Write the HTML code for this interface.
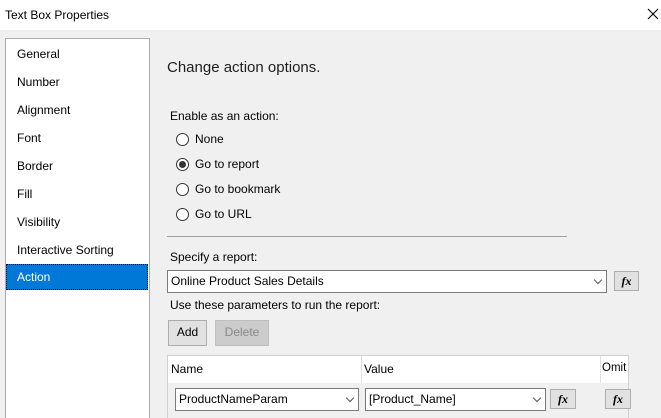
<!DOCTYPE html>
<html style="width:661px;height:418px;overflow:hidden"><head><style>
*{box-sizing:border-box;margin:0;padding:0}
body{width:661px;height:418px;overflow:hidden;background:#f0f0f0;font-family:"Liberation Sans",sans-serif;font-size:12px;color:#000;position:relative}
.a{position:absolute}
.title{left:0;top:0;width:661px;height:30px;background:#fff}
.nav{left:5px;top:38px;width:145px;height:390px;background:#fff;border:1px solid #adadad}
.nav div{position:absolute;left:11px;font-size:12px}
.sel{left:6px;top:264px;width:142px;height:26px;background:#0078d7;border:1px dotted #003;}
.radio{width:13px;height:13px;border:1px solid #333;border-radius:50%;background:#fff}
.combo{background:#fff;border:1px solid #7a7a7a;padding-left:3px;line-height:20px}
.chev{position:absolute;right:5px;top:3px;width:6px;height:6px;border-right:1px solid #555;border-bottom:1px solid #555;transform:rotate(45deg)}
.fx{background:#e1e1e1;border:1px solid #adadad;font-family:"Liberation Serif",serif;font-style:italic;font-weight:bold;text-align:center;font-size:12px;line-height:18px}
.btn{background:#e1e1e1;border:1px solid #adadad;text-align:center;line-height:23px}
</style></head><body>
<div class="a title"></div>
<div class="a" style="left:5px;top:8px">Text Box Properties</div>
<svg class="a" style="left:647px;top:8px" width="12" height="12"><path d="M1 1L11 11M11 1L1 11" stroke="#000" stroke-width="1.1"/></svg>
<div class="a nav">
<div style="top:8px">General</div><div style="top:36px">Number</div><div style="top:64px">Alignment</div><div style="top:92px">Font</div><div style="top:120px">Border</div><div style="top:148px">Fill</div><div style="top:176px">Visibility</div><div style="top:204px">Interactive Sorting</div>
</div>
<div class="a sel"></div>
<div class="a" style="left:17px;top:270px;color:#fff">Action</div>
<div class="a" style="left:167px;top:59px;font-size:15px;color:#1e1e1e">Change action options.</div>
<div class="a" style="left:170px;top:109px">Enable as an action:</div>
<div class="a radio" style="left:176px;top:133px"></div><div class="a" style="left:195px;top:132px">None</div>
<div class="a radio" style="left:176px;top:158px"></div><div class="a" style="left:179px;top:161px;width:7px;height:7px;border-radius:50%;background:#333"></div><div class="a" style="left:195px;top:157px">Go to report</div>
<div class="a radio" style="left:176px;top:183px"></div><div class="a" style="left:195px;top:182px">Go to bookmark</div>
<div class="a radio" style="left:176px;top:208px"></div><div class="a" style="left:195px;top:207px">Go to URL</div>
<div class="a" style="left:167px;top:236px;width:400px;height:1px;background:#a0a0a0"></div>
<div class="a" style="left:170px;top:250px">Specify a report:</div>
<div class="a combo" style="left:167px;top:270px;width:440px;height:23px">Online Product Sales Details<div class="chev" style="top:6px"></div></div>
<div class="a fx" style="left:614px;top:271px;width:25px;height:20px">fx</div>
<div class="a" style="left:170px;top:298px">Use these parameters to run the report:</div>
<div class="a btn" style="left:168px;top:320px;width:39px;height:26px">Add</div>
<div class="a btn" style="left:215px;top:320px;width:54px;height:26px;background:#ccc;border-color:#bfbfbf;color:#888">Delete</div>
<div class="a" style="left:167px;top:355px;width:462px;height:70px;background:#f0f0f0;border:1px solid #d0d0d0"></div>
<div class="a" style="left:168px;top:356px;width:460px;height:27px;background:#fff"></div>
<div class="a" style="left:361px;top:356px;width:1px;height:27px;background:#e0e0e0"></div>
<div class="a" style="left:600px;top:356px;width:1px;height:27px;background:#e0e0e0"></div>
<div class="a" style="left:171px;top:362px">Name</div>
<div class="a" style="left:364px;top:362px">Value</div>
<div class="a" style="left:602px;top:362px;font-size:11.5px">Omit</div>
<div class="a combo" style="left:175px;top:388px;width:184px;height:23px">ProductNameParam<div class="chev" style="top:6px"></div></div>
<div class="a combo" style="left:365px;top:388px;width:181px;height:23px">[Product_Name]<div class="chev" style="top:6px"></div></div>
<div class="a fx" style="left:550px;top:389px;width:26px;height:20px">fx</div>
<div class="a fx" style="left:605px;top:389px;width:26px;height:20px">fx</div>
</body></html>
